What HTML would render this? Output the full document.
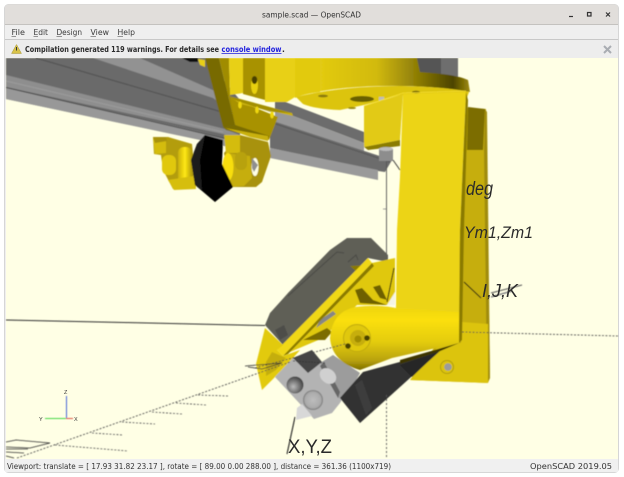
<!DOCTYPE html>
<html><head><meta charset="utf-8"><title>sample.scad — OpenSCAD</title>
<style>html,body{margin:0;padding:0;background:#fff;width:624px;height:477px;overflow:hidden}svg{display:block}
text{font-family:"DejaVu Sans","Liberation Sans",sans-serif}</style></head><body>
<svg width="624" height="477" viewBox="0 0 624 477" xmlns="http://www.w3.org/2000/svg">
<defs>
<linearGradient id="disc" gradientUnits="userSpaceOnUse" x1="300" x2="470" y1="0" y2="0"><stop offset="0" stop-color="#e8d014"/><stop offset=".45" stop-color="#d2ba0c"/><stop offset=".7" stop-color="#8a7a06"/><stop offset=".9" stop-color="#4c4404"/><stop offset="1" stop-color="#a08c08"/></linearGradient>
<linearGradient id="arm" gradientUnits="userSpaceOnUse" x1="0" x2="0" y1="307" y2="370"><stop offset="0" stop-color="#eed512"/><stop offset=".2" stop-color="#fbe010"/><stop offset=".55" stop-color="#e4cc0c"/><stop offset=".85" stop-color="#b8a208"/><stop offset="1" stop-color="#7d6e04"/></linearGradient>
<linearGradient id="c1" x1="0" x2="1"><stop offset="0" stop-color="#c8b008"/><stop offset=".5" stop-color="#ffe814"/><stop offset="1" stop-color="#b09a06"/></linearGradient>
<radialGradient id="b1" cx=".4" cy=".6" r=".6"><stop offset="0" stop-color="#bbb"/><stop offset="1" stop-color="#444"/></radialGradient>
<radialGradient id="b2" cx=".5" cy=".5" r=".5"><stop offset="0" stop-color="#bdbdbd"/><stop offset=".8" stop-color="#aaa"/><stop offset="1" stop-color="#777"/></radialGradient>
<filter id="s" x="-5%" y="-5%" width="110%" height="110%"><feGaussianBlur stdDeviation=".4"/></filter>
<filter id="t" x="-5%" y="-5%" width="110%" height="110%"><feGaussianBlur stdDeviation=".25"/></filter>
</defs>

<rect x="5" y="4" width="613" height="468" fill="#f0efee" rx="4"/>
<rect x="4.500" y="4.500" width="614" height="468" fill="none" stroke="#d6d6d6" rx="4"/>

<!-- viewport -->
<rect x="6" y="58" width="612" height="401" fill="#ffffe5"/>
<g filter="url(#s)">
<!-- rail left -->
<polygon points="6,58 205,58 240,100 240,148 6,99" fill="#6a6a6a"/>
<polygon points="93,58 140,58 240,102 240,118 213,98" fill="#929292"/>
<polyline points="36,58 215,110 240,118" fill="none" stroke="#555" stroke-width="1.300"/>
<polygon points="6,75 225,129 240,135 240,140 223,134 6,87" fill="#8e8e8e"/>
<polygon points="6,87 200,132 240,142 240,150 200,140 6,99" fill="#989898"/>
<polyline points="6,87.500 240,142" fill="none" stroke="#4a4a4a" stroke-width=".9"/>
<polyline points="6,81 223,132" fill="none" stroke="#9c9c9c" stroke-width="1"/>
<!-- rail right -->
<polygon points="275,98 364,132 364,143 275,109" fill="#6c6c6c"/>
<polygon points="275,109 364,143 364,155 275,123" fill="#989898"/>
<polygon points="270,120 392,160 385,172 378,171 270,148" fill="#6c6c6c"/>
<polygon points="270,148 378,170 378,180 270,158" fill="#9a9a9a"/>
<polyline points="270,122 390,162" fill="none" stroke="#565656" stroke-width="1"/>
<polygon points="182,58 198,58 198,62 190,62" fill="#111"/>
<polygon points="198,59 205,60 205,67 200,65" fill="#e8d012"/>

<!-- back gray block -->
<polygon points="415,58 441,58 441,76 420,73" fill="#555"/>
<polygon points="441,58 458,58 458,80 441,76" fill="#6e6e6e"/>
<!-- disc -->
<path d="M290,97 L290,58 L417,58 L420,72 Q455,74 468,80 L470,92 Q430,85 380,86 Q330,87 296,97Z" fill="url(#disc)"/>
<path d="M296,97 Q340,86 400,86 Q450,87 469,92 L466,100 L400,95 L364,105 L340,110 Q315,109 303,104Z" fill="#dcc40e"/>
<ellipse cx="362" cy="99" rx="12" ry="3" fill="#6a6006"/><ellipse cx="323" cy="96" rx="5" ry="1.400" fill="#8a7a08"/><ellipse cx="416" cy="92" rx="4" ry="1.200" fill="#6a5e06"/><ellipse cx="352" cy="108" rx="4" ry="1" fill="#9a8a08"/>
<polygon points="379,97 384,97 384,101 379,101" fill="#bcbcbc"/>

<!-- bracket -->
<polygon points="229,97 278,117 269,140 235,125" fill="#a89206"/>
<polygon points="219,58 229,58 230,96 235,125" fill="#a08c05"/>
<polygon points="205,58 219,58 235,125 223,127" fill="#786a02"/>
<polygon points="229,58 243,58 243,93 230,95" fill="#e8d012"/>
<polygon points="243,58 265,58 265,100 243,94" fill="#a89206"/>
<polygon points="265,58 295,58 295,97 287,102 265,102" fill="#e8d012"/>
<polygon points="295,58 320,58 320,92 305,94 295,98" fill="#e2ca10"/>
<ellipse cx="254.500" cy="85" rx="3.500" ry="9" fill="#e8d010"/><ellipse cx="254.500" cy="80" rx="2.800" ry="4" fill="#4a4000"/>
<polygon points="229,96 292,113 293,116 240,104" fill="#c8b00a"/>
<polygon points="229,96 292,113 270,112 235,100" fill="#8a7a02" opacity=".6"/>
<ellipse cx="240" cy="105" rx="1.800" ry="3.500" fill="#f0d810"/><ellipse cx="257" cy="110" rx="1.800" ry="3.500" fill="#f0d810"/><ellipse cx="272" cy="115" rx="1.800" ry="3.500" fill="#f0d810"/>
<polygon points="223,127 235,125 269,136 267,140 226,130" fill="#7a6c00"/>
<polygon points="225,128 268,136 268,141 250,137" fill="#c9b10a"/>
<!-- right mount plate -->
<polygon points="240,135 268,142 271,156 262,182 256,187 230,187 224,153" fill="#a89208"/>
<ellipse cx="255" cy="167" rx="3.500" ry="9" fill="#ffffe5"/>
<polygon points="252,158 258,165 254,172 252,168" fill="#8f8f8f"/>
<polygon points="226,153 250,156 252,178 244,186 230,187" fill="#c6ae08"/>
<polygon points="224,135 240,135 240,153 226,153" fill="#d4bc0a"/>
<rect x="235" y="152" width="12" height="18" rx="5.500" fill="#b8a208"/>
<ellipse cx="228" cy="167" rx="5.500" ry="14" fill="#f8de10"/>

<!-- left mount -->
<polygon points="153,137 168,137 192,144 196,187 173,189 163,170 161,155 154,154" fill="#b39d08"/>
<polygon points="153,137 166,138 166,153 155,154" fill="#d4bc0a"/>
<polygon points="153,137 166,137 167,141 155,143" fill="#a89208"/>
<rect x="162" y="155" width="14" height="20" rx="6" fill="#e0c80e"/>
<rect x="178" y="147" width="14" height="40" rx="6" fill="url(#c1)"/>
<polygon points="168,180 194,176 196,189 174,190" fill="#d6be0a"/>
<!-- wheel -->
<polygon points="205,135 223,140 222,164 233,187 215,202 195,185 191,160 197,144" fill="#000"/>
<polygon points="197,144 205,135 200,160 202,190 195,185 191,160" fill="#1d1d1d"/>

<!-- upright -->
<polygon points="466,108 486,109 490,378 488,383 410,380 440,340 462,230" fill="#c6ae0c"/>
<polygon points="468,107 485,109 483,150 467,150" fill="#7c6d04"/>
<polygon points="485,109 487,112 490,378 487,383 484,150" fill="#a08c08"/>
<polygon points="462,322 488,324 488,383 410,380 440,344 461,343" fill="#dcc40f"/>
<polygon points="364,106 403,94 400,140 364,147" fill="#e2ca12"/>
<polygon points="364,147 400,140 400,146 368,150" fill="#8a7c06"/>
<polygon points="403,94 466,92 460,230 459,342 396,342 396,308 397,230 400,177" fill="#ecd412"/>
<polygon points="466,92 468,100 464,230 462,340 459,343 460,230" fill="#8a7a06"/>
<polyline points="364,106 403,93 466,91" fill="none" stroke="#f8e030" stroke-width=".8"/>
<!-- screw -->
<circle cx="448" cy="367" r="3.800" fill="#9b9b9b"/><circle cx="447" cy="367" r="6.500" fill="none" stroke="#a59208" stroke-width=".8"/>

<!-- gray pin -->
<polygon points="379,149 393,149 393,161 379,161" fill="#8d8d8d"/>
<ellipse cx="386" cy="149" rx="7" ry="2" fill="#bbb"/>
<polyline points="393,160 400,170" stroke="#222" fill="none" stroke-width=".8"/>
<line x1="386.500" y1="161" x2="386.500" y2="300" stroke="#555" stroke-width=".9"/>
<line x1="383" y1="209" x2="386" y2="209" stroke="#888" stroke-width=".8"/>

<!-- battery -->
<polygon points="347,238 371,238 388,255 388,262 368,258 283,345 265,325 270,313 280,302 288,293 330,250" fill="#5f5f57"/>
<polyline points="288,296 337,252 344,253" fill="none" stroke="#4a4a44" stroke-width="1"/>
<polyline points="348,262 356,255 358,260" fill="none" stroke="#4a4a44"/>
<polygon points="275,330 284,325 288,335 280,340" fill="#4e4e48"/>
<!-- plate behind -->
<polygon points="372,263 395,258 395,305 357,305 333,328 323,338 283,355" fill="#e0c80f"/>
<polygon points="350,266 366,265 358,273" fill="#8a7a06"/>
<polygon points="355,290 362,288 373,300 387,305 360,303" fill="#6e6000"/>
<polygon points="373,287 380,285 387,300 380,298" fill="#6e6000"/>
<polygon points="320,320 333,311 336,314 316,328" fill="#868686"/>
<polygon points="303,340 327,328 332,332 325,340" fill="#7b6c04"/>
<polygon points="387,305 395,292 395,305" fill="#f4f4e4"/>
<polygon points="368,258 372,263 283,356 277,350" fill="#f0d812"/>
<polygon points="372,263 374,266 288,354 283,356" fill="#8a7a06"/>
<!-- left wing -->
<polygon points="265,328 283,345 277,350 283,356 300,350 293,358 275,377 262,390 256,364" fill="#e2ca10"/>
<polygon points="272,352 286,358 276,370 266,376 266,362" fill="#c4ae08"/>
<line x1="394" y1="268" x2="387" y2="302" stroke="#111" stroke-width="1"/>

<!-- lower gray -->
<polygon points="293,358 275,377 314,419 332,413 340,403 345,395 322,362 308,372" fill="#b3b3b3"/>
<polygon points="293,358 312,350 322,362 308,373" fill="#454545"/>
<polygon points="320,363 333,355 360,373 347,397 338,398" fill="#9c9c9c"/>
<polygon points="320,366 324,362 340,392 338,398" fill="#666"/>
<ellipse cx="328" cy="376" rx="9" ry="7" fill="#d0d0d0" transform="rotate(40 328 376)"/>
<circle cx="295" cy="385" r="8.500" fill="url(#b1)"/>
<circle cx="313" cy="400" r="10" fill="url(#b2)"/>
<polygon points="297,408 302,404 312,416 296,420" fill="#d8d8d8"/>
<polygon points="340,398 363,372 440,351 410,378 360,423" fill="#333"/>
<polygon points="355,385 362,380 372,408 366,415" fill="#3e3e3e"/>
<polygon points="400,365 438,352 412,377" fill="#262626"/>

<!-- arm -->
<path d="M355,307 Q375,304 396,308 L459,312 L459,343 L392,358 L360,370 Q332,362 330,338 Q332,312 355,307Z" fill="url(#arm)"/>
<polygon points="400,360 459,343 438,352 400,364" fill="#3d3600"/>
<circle cx="357" cy="338" r="13.500" fill="#e0c80c" stroke="#c0aa08" stroke-width="1"/>
<circle cx="358" cy="338" r="8" fill="#c6ae08"/><circle cx="367" cy="338" r="2.800" fill="#4a4200"/><circle cx="348" cy="346" r="2.800" fill="#4a4200"/><circle cx="358" cy="339" r="3.500" fill="#a08c06"/>

<!-- lines -->
<polyline points="6,320 265,325.500" stroke="#333" stroke-width="1" fill="none"/>
<line x1="386.500" y1="395" x2="386.500" y2="459" stroke="#555" stroke-width=".9" stroke-dasharray="2 2"/>
<line x1="462" y1="332" x2="618" y2="336" stroke="#444" stroke-width=".8" stroke-dasharray="2 1.500"/>
<line x1="345" y1="344" x2="255" y2="368" stroke="#444" stroke-width=".8" stroke-dasharray="2 1.500"/>
<line x1="293" y1="361" x2="325" y2="363" stroke="#333" stroke-width=".7" stroke-dasharray="2 1"/>
<line x1="17" y1="458" x2="290" y2="362" stroke="#444" stroke-width=".8" stroke-dasharray="2 1.500"/>
<g stroke="#555" stroke-width=".8" stroke-dasharray="2 1.500" fill="none">
<line x1="55" y1="445" x2="128" y2="451"/><line x1="92" y1="433" x2="123" y2="435"/><line x1="122" y1="422" x2="155" y2="424"/><line x1="152" y1="412" x2="182" y2="414"/><line x1="176" y1="403" x2="206" y2="405"/><line x1="198" y1="395" x2="228" y2="396"/>
</g>
<g stroke="#333" stroke-width=".8" fill="none">
<polyline points="6,442 16,440 50,443 30,448 6,447"/><polyline points="6,449 28,449"/><polyline points="6,452 24,453"/><polyline points="6,456 14,458"/>
<polyline points="245,366 282,363 262,369 248,367"/>
</g>
<polyline points="295,417 287,454" stroke="#111" stroke-width="1" fill="none"/>
<polyline points="464,282 481,298" stroke="#111" stroke-width="1" fill="none"/>
<line x1="491" y1="293" x2="522" y2="285" stroke="#555" stroke-width="1"/>
<line x1="491" y1="297" x2="512" y2="291" stroke="#888" stroke-width="1.500"/>

<!-- axes -->
<line x1="66.500" y1="396" x2="66.500" y2="418" stroke="#4a66d8" stroke-width="1"/>
<line x1="45" y1="418.500" x2="66" y2="418.500" stroke="#4cd84c" stroke-width="1"/>
<line x1="66" y1="418.500" x2="73" y2="418.500" stroke="#e05a4a" stroke-width="1"/>
</g>
<g filter="url(#t)">
<text x="64" y="394" font-size="5.500" fill="#333" style="font-family:'Liberation Sans'">Z</text>
<text x="39" y="421" font-size="5.500" fill="#333" style="font-family:'Liberation Sans'">Y</text>
<text x="74" y="421" font-size="5.500" fill="#333" style="font-family:'Liberation Sans'">X</text>

<text x="466" y="195" font-size="19" fill="#2c2c2c" style="font-family:'Liberation Sans';font-style:italic" textLength="27" lengthAdjust="spacingAndGlyphs">deg</text>
<text x="464" y="238" font-size="17" fill="#2c2c2c" style="font-family:'Liberation Sans';font-style:italic" textLength="69" lengthAdjust="spacingAndGlyphs">Ym1,Zm1</text>
<text x="482" y="297" font-size="18" fill="#2c2c2c" style="font-family:'Liberation Sans';font-style:italic" textLength="36" lengthAdjust="spacingAndGlyphs">I,J,K</text>
<text x="288" y="453" font-size="19" fill="#2c2c2c" style="font-family:'Liberation Sans'" textLength="44" lengthAdjust="spacingAndGlyphs">X,Y,Z</text>

<!-- title bar -->
<path d="M5,24 V8 Q5,4.500 9,4.500 H614 Q618,4.500 618,8 V24Z" fill="#e1dedb"/>
<line x1="5" y1="24.500" x2="618" y2="24.500" stroke="#c4c2bf"/>
<text x="262" y="17.500" font-size="8.200" fill="#333" textLength="99" lengthAdjust="spacingAndGlyphs">sample.scad — OpenSCAD</text>
<line x1="569" y1="16.500" x2="573" y2="16.500" stroke="#333" stroke-width="1.200"/>
<rect x="587.500" y="12.500" width="3.500" height="3.500" fill="none" stroke="#333" stroke-width="1.200"/>
<path d="M606,12.500 L610,16.500 M610,12.500 L606,16.500" stroke="#333" stroke-width="1.200"/>

<!-- menu -->
<rect x="5" y="25" width="613" height="14" fill="#efefef"/>
<line x1="5" y1="39.500" x2="618" y2="39.500" stroke="#c8c8c8"/>
<g font-size="8" fill="#3a3a3a">
<text x="11.500" y="35" textLength="13.500" lengthAdjust="spacingAndGlyphs">File</text>
<text x="33.500" y="35" textLength="14.500" lengthAdjust="spacingAndGlyphs">Edit</text>
<text x="56.500" y="35" textLength="25.500" lengthAdjust="spacingAndGlyphs">Design</text>
<text x="90.500" y="35" textLength="18.500" lengthAdjust="spacingAndGlyphs">View</text>
<text x="117.500" y="35" textLength="17.500" lengthAdjust="spacingAndGlyphs">Help</text>
</g>
<g stroke="#555" stroke-width=".6"><line x1="11.500" y1="36.500" x2="16" y2="36.500"/><line x1="33.500" y1="36.500" x2="38" y2="36.500"/><line x1="56.500" y1="36.500" x2="62" y2="36.500"/><line x1="90.500" y1="36.500" x2="96" y2="36.500"/><line x1="117.500" y1="36.500" x2="123" y2="36.500"/></g>

<!-- message bar -->
<rect x="5" y="40" width="613" height="18" fill="#ededed"/>
<polygon points="16.500,44.500 21.500,53.500 11.500,53.500" fill="#d8c34a" stroke="#a8963a" stroke-width=".5"/>
<line x1="16.500" y1="47" x2="16.500" y2="50.500" stroke="#333" stroke-width="1"/>
<text x="25" y="52" font-size="7.600" font-weight="bold" fill="#2b2b2b" textLength="194" lengthAdjust="spacingAndGlyphs">Compilation generated 119 warnings. For details see</text>
<text x="221.500" y="52" font-size="7.600" font-weight="bold" fill="#2222dd" textLength="60" lengthAdjust="spacingAndGlyphs" text-decoration="underline">console window</text>
<text x="282" y="52" font-size="7.600" font-weight="bold" fill="#2b2b2b">.</text>
<path d="M604,46 L611,53 M611,46 L604,53" stroke="#a9adb2" stroke-width="2"/>

<!-- status -->
<rect x="5" y="459" width="613" height="13" fill="#f0f0f0"/>
<text x="7" y="469" font-size="8" fill="#333" textLength="384" lengthAdjust="spacingAndGlyphs">Viewport: translate = [ 17.93 31.82 23.17 ], rotate = [ 89.00 0.00 288.00 ], distance = 361.36 (1100x719)</text>
<text x="530" y="469" font-size="8" fill="#333" textLength="82" lengthAdjust="spacingAndGlyphs">OpenSCAD 2019.05</text>
</g>
</svg>
</body></html>
